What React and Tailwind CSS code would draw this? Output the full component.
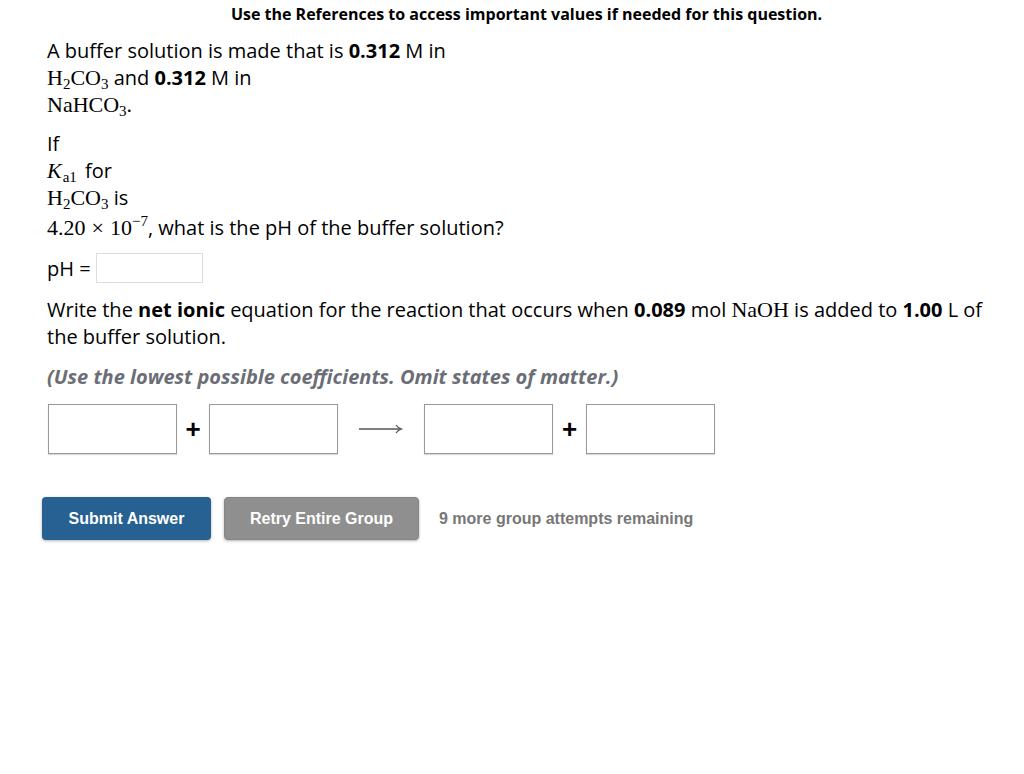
import React from "react";

const M = ({ children }) => (
  <span className="text-[22px] leading-none" style={{ fontFamily: '"Liberation Serif", "DejaVu Serif", serif' }}>{children}</span>
);
const S = ({ children }) => (
  <span className="text-[15px] leading-[0] relative top-[4px]">{children}</span>
);

const H2CO3 = () => (
  <M>H<S>2</S>CO<S>3</S></M>
);

export default function App() {
  return (
    <div className="w-[1024px] h-[774px] bg-white text-black" style={{ fontFamily: '"Open Sans", sans-serif' }}>
      <div className="pt-[4px] pl-[29px] flex justify-center">
        <div className="text-[16px] font-bold leading-[20px]">Use the References to access important values if needed for this question.</div>
      </div>
      <div className="pl-[47px] pt-[13px] text-[20px] leading-[27px]">
        <div>
          A buffer solution is made that is <b>0.312</b> M in
          <br />
          <H2CO3 /> and <b>0.312</b> M in
          <br />
          <M>NaHCO<S>3</S>.</M>
        </div>
        <div className="mt-[12px]">
          If
          <br />
          <M><i>K</i><span className="text-[15px] leading-[0] relative top-[4px] ml-[1px] mr-[3px]">a1</span></M> for
          <br />
          <H2CO3 /> is
        </div>
        <div className="leading-[27px] mt-[3px]">
          <M>4.20<span className="mx-[6px]">×</span>10<span className="text-[15px] leading-[0] relative top-[-9px]">−7</span></M>, what is the pH of the buffer solution?
        </div>
        <div className="mt-[12px] flex items-center h-[30px]">
          <span>pH =</span>
          <div className="ml-[5px] w-[107px] h-[30px] border border-[#dcdcdc]"></div>
        </div>
        <div className="mt-[13px] pr-[30px]">
          Write the <b>net ionic</b> equation for the reaction that occurs when <b>0.089</b> mol <M>NaOH</M> is added to <b>1.00</b> L of the buffer solution.
        </div>
        <div className="mt-[13px] font-bold italic text-[#6b6e76]">(Use the lowest possible coefficients. Omit states of matter.)</div>
      </div>
      <div className="pl-[48px] mt-[14px] flex items-center">
        <div className="w-[129px] h-[50px] border border-[#999] shadow-[0_1px_1px_rgba(0,0,0,0.15)]"></div>
        <div className="w-[32px] text-center text-[26px] font-bold leading-none" style={{ fontFamily: '"Liberation Sans", sans-serif' }}>+</div>
        <div className="w-[129px] h-[50px] border border-[#999] shadow-[0_1px_1px_rgba(0,0,0,0.15)]"></div>
        <div className="w-[86px] flex justify-center">
          <svg width="44" height="12" viewBox="0 0 44 12">
            <line x1="0" y1="6" x2="42" y2="6" stroke="#555" strokeWidth="1.6" />
            <path d="M37 2 Q39 5 42.5 6 Q39 7 37 10" fill="none" stroke="#555" strokeWidth="1.3" />
          </svg>
        </div>
        <div className="w-[129px] h-[50px] border border-[#999] shadow-[0_1px_1px_rgba(0,0,0,0.15)]"></div>
        <div className="w-[33px] text-center text-[26px] font-bold leading-none" style={{ fontFamily: '"Liberation Sans", sans-serif' }}>+</div>
        <div className="w-[129px] h-[50px] border border-[#999] shadow-[0_1px_1px_rgba(0,0,0,0.15)]"></div>
      </div>
      <div className="pl-[42px] mt-[43px] flex items-center" style={{ fontFamily: '"Liberation Sans", Arial, sans-serif' }}>
        <div className="w-[169px] h-[43px] rounded-[4px] bg-[#266192] text-white font-bold text-[16px] flex items-center justify-center shadow-[0_1px_3px_rgba(0,0,0,0.3)]">Submit Answer</div>
        <div className="ml-[13px] w-[195px] h-[43px] rounded-[4px] bg-[#8f8f8f] text-white font-bold text-[16px] flex items-center justify-center shadow-[0_1px_3px_rgba(0,0,0,0.3)] border border-[#858585]">Retry Entire Group</div>
        <div className="ml-[20px] text-[16px] font-bold text-[#777]">9 more group attempts remaining</div>
      </div>
    </div>
  );
}
